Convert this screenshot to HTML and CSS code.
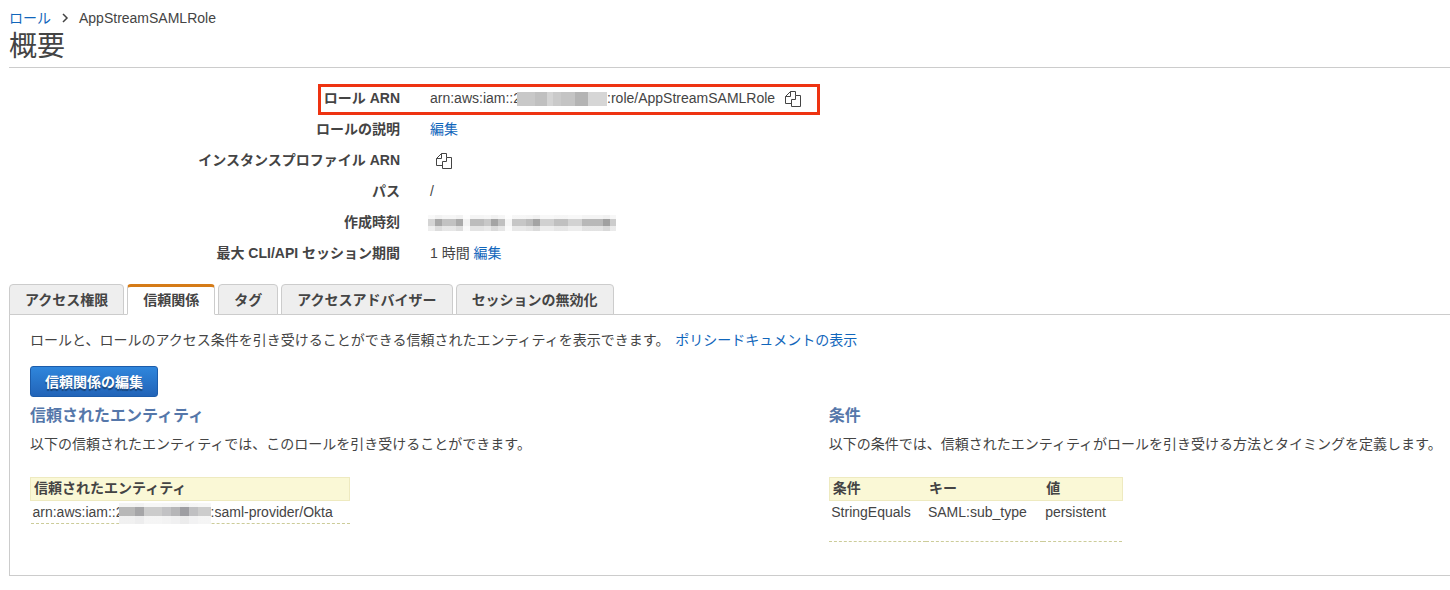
FILE: index.html
```
<!DOCTYPE html>
<html lang="ja">
<head>
  <meta charset="UTF-8">
  <meta name="viewport" content="width=device-width, initial-scale=1.0">
  <title>AppStreamSAMLRole</title>
  <link rel="stylesheet" href="styles.css">
</head>
<body>
  <svg class="defs" width="0" height="0" aria-hidden="true">
    <symbol id="copy" viewBox="0 0 18 18">
      <path d="M6.5 1.5H11.5V5.5M6.5 1.5L1.5 6.5V13.5H7.5M6.5 1.5V6.5H1.5" />
      <path d="M11.5 5.5H16.5V16.5H7.5V9.5H11.5Z" />
    </symbol>
  </svg>

  <nav class="breadcrumb">
    <a href="#">ロール</a>
    <svg class="chevron" width="8" height="10" viewBox="0 0 8 10"><path d="M2 1L6 5L2 9" /></svg>
    <span>AppStreamSAMLRole</span>
  </nav>
  <h1>概要</h1>

  <dl class="summary">
    <div class="row highlight">
      <dt>ロール ARN</dt>
      <dd>arn:aws:iam::2<span class="mask mask-role"></span>:role/AppStreamSAMLRole
        <button class="copy" aria-label="コピー"><svg width="18" height="18"><use href="#copy" /></svg></button></dd>
    </div>
    <div class="row">
      <dt>ロールの説明</dt>
      <dd><a href="#">編集</a></dd>
    </div>
    <div class="row">
      <dt>インスタンスプロファイル ARN</dt>
      <dd><button class="copy" aria-label="コピー"><svg width="18" height="18"><use href="#copy" /></svg></button></dd>
    </div>
    <div class="row">
      <dt>パス</dt>
      <dd>/</dd>
    </div>
    <div class="row">
      <dt>作成時刻</dt>
      <dd><span class="mask mask-date"></span></dd>
    </div>
    <div class="row">
      <dt>最大 CLI/API セッション期間</dt>
      <dd>1 時間 <a href="#">編集</a></dd>
    </div>
  </dl>

  <div class="tabs" role="tablist">
    <button class="tab" role="tab">アクセス権限</button>
    <button class="tab active" role="tab" aria-selected="true">信頼関係</button>
    <button class="tab" role="tab">タグ</button>
    <button class="tab" role="tab">アクセスアドバイザー</button>
    <button class="tab" role="tab">セッションの無効化</button>
  </div>

  <div class="panel" role="tabpanel">
    <p class="lead">ロールと、ロールのアクセス条件を引き受けることができる信頼されたエンティティを表示できます。 <a href="#">ポリシードキュメントの表示</a></p>
    <button class="primary">信頼関係の編集</button>

    <div class="columns">
      <section>
        <h2>信頼されたエンティティ</h2>
        <p>以下の信頼されたエンティティでは、このロールを引き受けることができます。</p>
        <table class="entities">
          <thead>
            <tr><th>信頼されたエンティティ</th></tr>
          </thead>
          <tbody>
            <tr><td>arn:aws:iam::2<span class="mask mask-entity"></span>:saml-provider/Okta</td></tr>
          </tbody>
        </table>
      </section>
      <section>
        <h2>条件</h2>
        <p>以下の条件では、信頼されたエンティティがロールを引き受ける方法とタイミングを定義します。</p>
        <table class="conditions">
          <thead>
            <tr><th>条件</th><th>キー</th><th>値</th></tr>
          </thead>
          <tbody>
            <tr><td>StringEquals</td><td>SAML:sub_type</td><td>persistent</td></tr>
          </tbody>
        </table>
      </section>
    </div>
  </div>
</body>
</html>
```
FILE: styles.css
```
*, *::after { box-sizing: border-box; }
body {
  margin: 0;
  padding: 8px 0 14px 9px;
  font-family: "Liberation Sans", "Noto Sans CJK JP", sans-serif;
  font-size: 14px;
  line-height: 20px;
  color: #444;
  background: #fff;
}
a { color: #1166bb; text-decoration: none; }
button { font-family: inherit; font-size: 14px; cursor: pointer; }
svg { fill: none; stroke: #444; }
.defs { position: absolute; }

.breadcrumb { display: flex; align-items: center; gap: 10px; }
.chevron { stroke-width: 1.5; }
h1 {
  margin: 0;
  padding-bottom: 1px;
  font-size: 28px;
  line-height: 38px;
  font-weight: normal;
  border-bottom: 1px solid #ccc;
}

/* 概要 */
.summary { margin: 14px 0 16px; }
.row {
  display: grid;
  grid-template-columns: 391px 1fr;
  column-gap: 30px;
  height: 31px;
  align-items: center;
}
.row dt { text-align: right; font-weight: bold; }
.row dd { margin: 0; }
.highlight { position: relative; }
.highlight::after {
  content: "";
  position: absolute;
  left: 309px;
  top: 2px;
  width: 502px;
  height: 31px;
  border: 3px solid #ee3311;
  pointer-events: none;
}
.copy {
  padding: 0;
  margin: -2px 0 -2px 5px;
  border: none;
  background: none;
  vertical-align: middle;
}
.copy svg { display: block; }

/* 伏せ字 */
.mask {
  display: inline-block;
  vertical-align: middle;
}
.mask-role {
  width: 90px;
  height: 14px;
  margin-left: -4px;
  background: linear-gradient(90deg,
    #c8c8c8 0 18px, #c0c0c0 18px 30px, #d4d4d4 30px 36px, #cacaca 36px 44px,
    #c4c4c4 44px 58px, #b4b4b4 58px 71px, #d6d6d6 71px);
}
.mask-date {
  width: 188px;
  height: 16px;
  margin-left: -2px;
  background:
    linear-gradient(rgba(255, 255, 255, 0.85) 0 4px, transparent 4px 11px, rgba(255, 255, 255, 0.6) 11px),
    linear-gradient(90deg,
      #d4d4d4 0 7px, #a8a8a8 7px 14px, #c2c2c2 14px 28px, #aaa 28px 35px, #f2f2f2 35px 42px,
      #bcbcbc 42px 56px, #c8c8c8 56px 63px, #a4a4a4 63px 70px, #c0c0c0 70px 77px, #f6f6f6 77px 84px,
      #c6c6c6 84px 98px, #bbb 98px 105px, #a4a4a4 105px 112px, #d0d0d0 112px 126px, #c0c0c0 126px 140px,
      #d2d2d2 140px 154px, #b8b8b8 154px 175px, #a0a0a0 175px 182px, #ccc 182px);
}
.mask-entity {
  width: 92px;
  height: 21px;
  margin: -4px 0 -4px -5px;
  background:
    linear-gradient(rgba(255, 255, 255, 0.85) 0 4px, transparent 4px 13px, rgba(255, 255, 255, 0.8) 13px),
    linear-gradient(90deg,
      #b8b8b8 0 16px, #a6a6a8 16px 25px, #ccc 25px 43px, #c2c2c4 43px 52px,
      #b6b6b8 52px 61px, #9e9ea2 61px 70px, #c0c0c2 70px 79px, #ccc 79px),
    #fff;
  position: relative;
}

/* タブ */
.tabs { display: flex; gap: 3px; }
.tab {
  height: 31px;
  padding: 0 15px 2px;
  font-weight: bold;
  color: #444;
  background: #eee;
  border: 1px solid #ccc;
  border-radius: 4px 4px 0 0;
}
.tab.active {
  padding-bottom: 4px;
  background: #fff;
  border-top: 3px solid #d57b17;
  border-bottom-color: #fff;
  position: relative;
}
.panel {
  margin-top: -1px;
  padding: 15px 0 33px 20px;
  border: 1px solid #ccc;
  border-right: none;
}
.lead { margin: 0 0 16px; }
.lead a { margin-left: 2px; }
.primary {
  height: 31px;
  padding: 0 14px 2px;
  font-weight: bold;
  color: #fff;
  text-shadow: 0 2px 1px rgba(0, 0, 0, 0.4);
  background: linear-gradient(#2f86dc, #2264b8);
  border: 1px solid #1c5caa;
  border-radius: 3px;
}

.columns { display: grid; grid-template-columns: 9fr 7fr; margin-top: 8px; }
.columns h2 { margin: 0; font-size: 16px; line-height: 22px; color: #5577aa; }
.columns p { margin: 7px 0 23px; }
table { border-collapse: collapse; table-layout: fixed; }
th {
  padding: 0 3px 2px;
  text-align: left;
  background: #faf8d6;
}
thead { border: 1px solid #eeeac0; }
td { padding: 1px 2px; vertical-align: top; border-bottom: 1px dashed #cccc99; }
.entities { width: 320px; }
.conditions { width: 294px; }
.conditions th:nth-child(1) { width: 33%; }
.conditions th:nth-child(2) { width: 40%; }
.conditions td { padding-bottom: 19px; }
```
